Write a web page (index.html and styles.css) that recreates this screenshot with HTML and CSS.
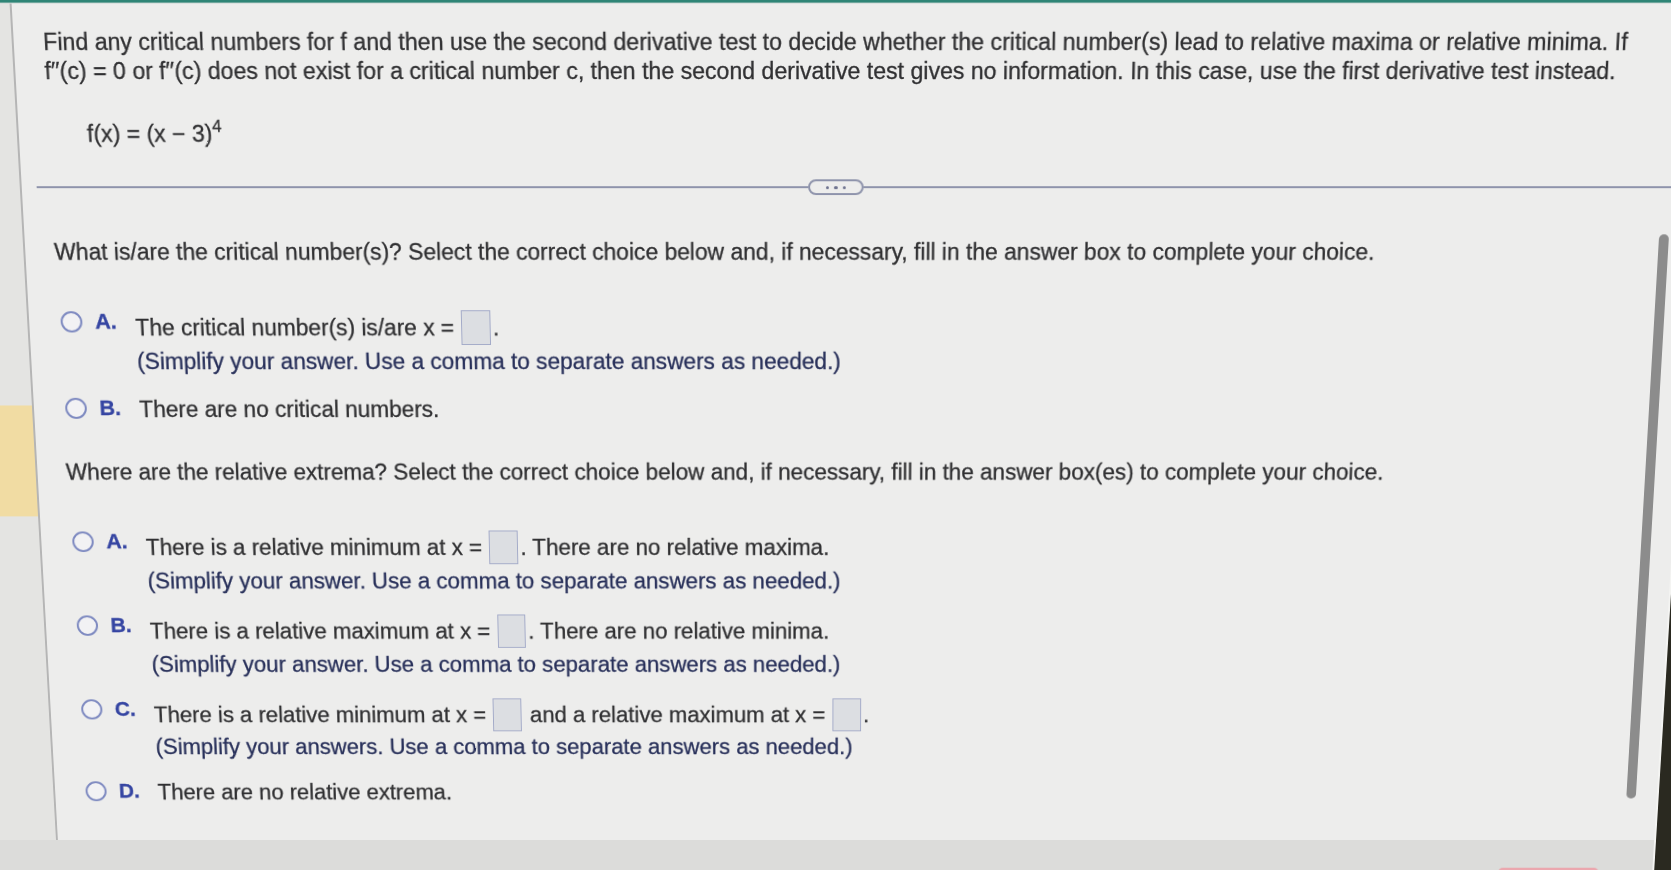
FILE: index.html
```html
<!DOCTYPE html>
<html lang="en">
<head>
<meta charset="utf-8">
<title>Second derivative test</title>
<link rel="stylesheet" href="styles.css">
</head>
<body>
<div class="screen">
  <div class="monitor">
    <div class="topbar"></div>
    <div class="workspace">
      <div class="gutter"><div class="gutter-flag"></div></div>
      <div class="panel">
        <div class="stem">
          <p class="intro">Find any critical numbers for f and then use the second derivative test to decide whether the critical number(s) lead to relative maxima or relative minima. If <span class="nowrap">f′′(c) = 0</span> or <span class="nowrap">f′′(c)</span> does not exist for a critical number c, then the second derivative test gives no information. In this case, use the first derivative test instead.</p>
          <p class="formula">f(x) = (x − 3)<sup class="exp">4</sup></p>
        </div>
        <div class="divider">
          <span class="rule rule-left"></span>
          <span class="more"><i></i><i></i><i></i></span>
          <span class="rule"></span>
        </div>
        <div class="lower">
          <div class="questions">
            <p class="prompt">What is/are the critical number(s)? Select the correct choice below and, if necessary, fill in the answer box to complete your choice.</p>
            <div class="options">
              <div class="opt">
                <span class="radio"></span>
                <span class="letter">A.</span>
                <div class="otext">
                  <div class="main boxed">The critical number(s) is/are x =<span class="ansbox"></span>.</div>
                  <div class="sub">(Simplify your answer. Use a comma to separate answers as needed.)</div>
                </div>
              </div>
              <div class="opt">
                <span class="radio"></span>
                <span class="letter">B.</span>
                <div class="otext">
                  <div class="main">There are no critical numbers.</div>
                </div>
              </div>
            </div>
            <p class="prompt prompt-second">Where are the relative extrema? Select the correct choice below and, if necessary, fill in the answer box(es) to complete your choice.</p>
            <div class="options options-second">
              <div class="opt">
                <span class="radio"></span>
                <span class="letter">A.</span>
                <div class="otext">
                  <div class="main boxed">There is a relative minimum at x =<span class="ansbox"></span>. There are no relative maxima.</div>
                  <div class="sub">(Simplify your answer. Use a comma to separate answers as needed.)</div>
                </div>
              </div>
              <div class="opt">
                <span class="radio"></span>
                <span class="letter">B.</span>
                <div class="otext">
                  <div class="main boxed">There is a relative maximum at x =<span class="ansbox"></span>. There are no relative minima.</div>
                  <div class="sub">(Simplify your answer. Use a comma to separate answers as needed.)</div>
                </div>
              </div>
              <div class="opt">
                <span class="radio"></span>
                <span class="letter">C.</span>
                <div class="otext">
                  <div class="main boxed">There is a relative minimum at x =<span class="ansbox"></span> and a relative maximum at x =<span class="ansbox"></span>.</div>
                  <div class="sub">(Simplify your answers. Use a comma to separate answers as needed.)</div>
                </div>
              </div>
              <div class="opt">
                <span class="radio"></span>
                <span class="letter">D.</span>
                <div class="otext">
                  <div class="main">There are no relative extrema.</div>
                </div>
              </div>
            </div>
          </div>
          <div class="scrolltrack"><div class="thumb"></div></div>
        </div>
      </div>
    </div>
    <div class="footer"><div class="footer-btn"></div></div>
  </div>
  <div class="bezel"></div>
</div>
</body>
</html>
```
FILE: styles.css
```css
* { box-sizing: border-box; }
html, body { margin: 0; padding: 0; overflow: hidden; background: #e4e4e2; }
body {
  width: 1671px;
  height: 870px;
  font-family: "Liberation Sans", Arial, Helvetica, sans-serif;
  font-size: 23.1px;
  color: #303032;
  -webkit-text-stroke: 0.3px currentColor;
}
.screen {
  display: flex;
  width: 1810px;
  height: 930px;
  margin-left: -50px;
  transform-origin: 870px 83px;
  transform: perspective(500px) rotateX(-1.971deg);
}
.monitor { width: 1750px; display: flex; flex-direction: column; }
.topbar { height: 4px; background: #2f8576; border-bottom: 1px solid #cfd9d7; }
.workspace { display: flex; height: 878px; }
.gutter { width: 66px; border-right: 2px solid #b5b5b5; background: #e4e4e2; }
.gutter-flag { margin-top: 409px; height: 117px; background: #f1dca3; }
.panel { flex: 1; display: flex; flex-direction: column; background: #ededec; }
.stem { padding: 23.6px 0 0 29.3px; }
.intro { margin: 0; line-height: 29.7px; max-width: 1600px; }
.nowrap { white-space: nowrap; }
.formula { margin: 33.5px 0 0 39.2px; line-height: 27.6px; }
.exp { font-size: 17px; vertical-align: 10px; line-height: 0; }
.divider { display: flex; align-items: center; height: 16px; margin-top: 32.4px; margin-left: 15.4px; }
.rule { flex: 1; height: 2px; background: #8e93ab; }
.rule-left { flex: none; width: 776.6px; }
.more {
  flex: none;
  width: 56px;
  height: 16px;
  border: 2px solid #8e93ab;
  border-radius: 8px;
  display: flex;
  align-items: center;
  justify-content: center;
  gap: 5px;
}
.more i { width: 3.5px; height: 3.5px; border-radius: 50%; background: #6d728e; }
.lower { flex: 1; display: flex; }
.questions { flex: 1; padding: 44.5px 0 0 29.3px; }
.scrolltrack { width: 35px; padding: 40px 0 0 3px; }
.thumb { width: 10px; height: 600px; border-radius: 5px; background: #8c8c8c; }
.prompt { margin: 0; line-height: 27.6px; }
.prompt-second { margin-top: 38.5px; }
.options { margin-top: 45px; display: flex; flex-direction: column; gap: 22px; }
.options-second { margin-top: 47.5px; }
.opt { display: flex; align-items: flex-start; }
.radio {
  flex: none;
  width: 22px;
  height: 22px;
  margin: 1px 0 0 2.7px;
  border: 2.5px solid #7d89c0;
  border-radius: 50%;
  background: #f2f2f4;
}
.letter {
  flex: none;
  width: 53.8px;
  padding-left: 13px;
  margin-top: 1px;
  font-weight: bold;
  font-size: 22px;
  line-height: 21px;
  color: #3545a2;
}
.otext { flex: 1; }
.main { line-height: 27.6px; }
.boxed { line-height: 36px; }
.sub { margin-top: 4.7px; line-height: 27.6px; color: #28305a; }
.ansbox {
  display: inline-block;
  width: 29.5px;
  height: 36px;
  margin: 0 2.5px 0 7.5px;
  border: 1.5px solid #a3aac8;
  background: #dcdee2;
  vertical-align: -10px;
  -webkit-text-stroke: 0;
}
.footer { flex: 1; background: #dcdcda; padding: 31px 0 0 1587px; }
.footer-btn { width: 106px; height: 17px; border-radius: 5px 5px 0 0; background: #eba7ae; }
.bezel { width: 60px; background: #2a2920; border-left: 2px solid #f4f4f2; }
```
